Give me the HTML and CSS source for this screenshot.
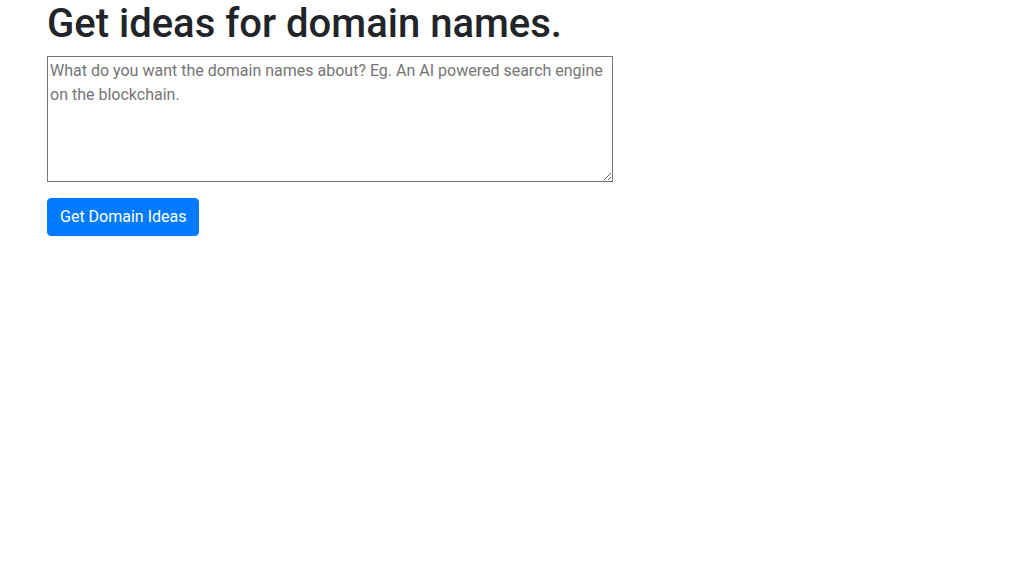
FILE: index.html
```html
<!DOCTYPE html>
<html>
<head>
<meta charset="utf-8">
<link rel="stylesheet" href="styles.css">
</head>
<body>
<main class="page">
  <h1 class="title">Get ideas for domain names.</h1>
  <textarea class="prompt" rows="5" placeholder="What do you want the domain names about? Eg. An AI powered search engine on the blockchain."></textarea>
  <button class="btn-primary" type="button">Get Domain Ideas</button>
</main>
</body>
</html>
```
FILE: styles.css
```css
html, body {
  margin: 0;
  padding: 0;
  background: #fff;
}
body {
  font-family: Roboto, "Liberation Sans", sans-serif;
  font-size: 16px;
  line-height: 1.5;
  color: #212529;
}
.page {
  padding: 0 47px;
  display: flex;
  flex-direction: column;
  align-items: flex-start;
}
.title {
  margin: 0 0 8px 0;
  font-size: 40px;
  font-weight: 500;
  line-height: 48px;
  color: #212529;
}
.prompt {
  box-sizing: border-box;
  width: 566px;
  height: 126px;
  margin: 0;
  padding: 2px;
  border: 1px solid #767676;
  font-family: Roboto, "Liberation Sans", sans-serif;
  font-size: 16px;
  line-height: 24px;
  color: #212529;
}
.prompt::placeholder {
  color: #757575;
  opacity: 1;
}
.btn-primary {
  margin-top: 16px;
  box-sizing: border-box;
  height: 38px;
  padding: 6px 12px;
  border: 1px solid #007bff;
  border-radius: 4px;
  background: #007bff;
  color: #fff;
  font-family: Roboto, "Liberation Sans", sans-serif;
  font-size: 16px;
  line-height: 24px;
  cursor: pointer;
}
```
